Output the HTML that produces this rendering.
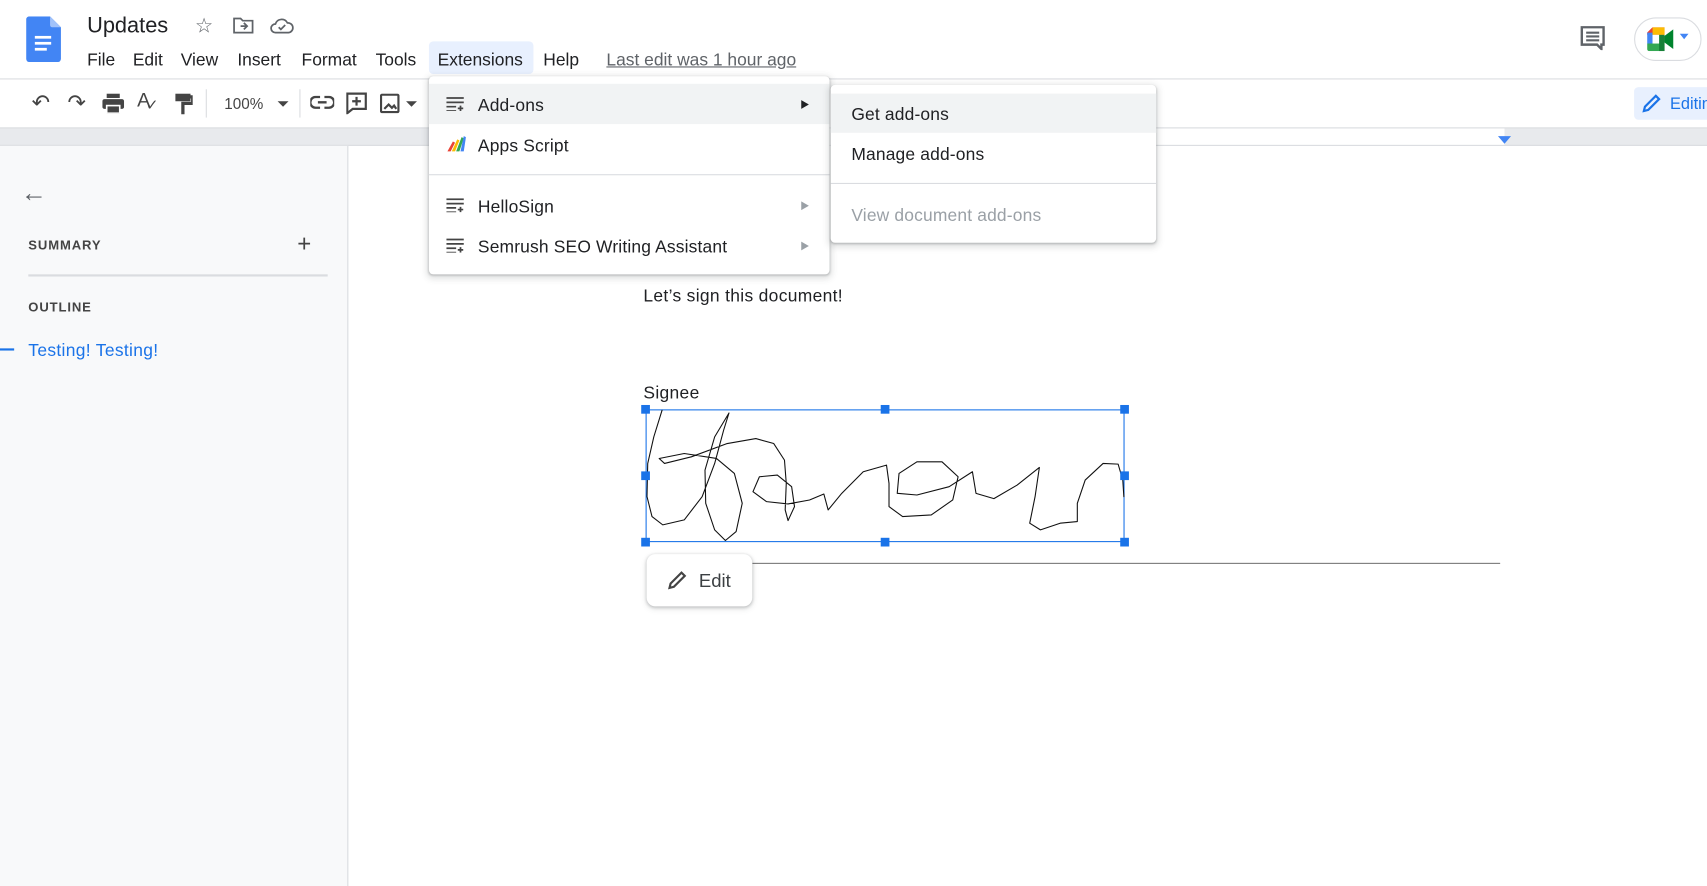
<!DOCTYPE html>
<html><head><meta charset="utf-8"><style>
*{margin:0;padding:0;box-sizing:border-box}
body{width:1707px;height:886px;overflow:hidden;background:#fff;font-family:"Liberation Sans",Arial,sans-serif;color:#202124}
#w{position:absolute;left:0;top:0;width:1568px;height:814px;transform:scale(1.08865);transform-origin:0 0}
.a{position:absolute}
.mi{position:absolute;font-size:16px;color:#202124;margin-top:2px;letter-spacing:.15px}
.dt{margin-top:2px;letter-spacing:.3px}
.ico{position:absolute;width:17px;height:13px}
</style></head><body><div id="w">
<!-- header -->
<svg class="a" style="left:24px;top:15px" width="32" height="42" viewBox="0 0 32 42"><path d="M3 0h19l10 10v29a3 3 0 0 1-3 3H3a3 3 0 0 1-3-3V3a3 3 0 0 1 3-3z" fill="#4285f4"/><path d="M22 0l10 10h-8a2 2 0 0 1-2-2z" fill="#a1c2fa"/><rect x="8" y="18" width="15" height="2.5" fill="#fff"/><rect x="8" y="23.5" width="15" height="2.5" fill="#fff"/><rect x="8" y="29" width="11" height="2.5" fill="#fff"/></svg>
<div class="a" style="left:80px;top:13px;font-size:20px">Updates</div>
<div class="a" style="left:179px;top:13px;font-size:19px;color:#5f6368">☆</div>
<svg class="a" style="left:214px;top:15px" width="20" height="16" viewBox="0 0 20 16" fill="none" stroke="#5f6368" stroke-width="1.6"><path d="M1 2h6l2 2h9v11H1z"/><path d="M7 9h6M10 6l3 3-3 3"/></svg>
<svg class="a" style="left:248px;top:15px" width="22" height="16" viewBox="0 0 22 16" fill="none" stroke="#5f6368" stroke-width="1.6"><path d="M5 15a4 4 0 0 1 0-8 6 6 0 0 1 11-1 4.5 4.5 0 0 1 1 9z"/><path d="M8 10l2 2 4-4"/></svg>
<div class="a" style="left:0;top:47px;font-size:16px;white-space:nowrap">
<span class="a" style="left:80px">File</span><span class="a" style="left:122px">Edit</span><span class="a" style="left:166px">View</span><span class="a" style="left:218px">Insert</span><span class="a" style="left:277px">Format</span><span class="a" style="left:345px">Tools</span>
<span class="a" style="left:394px;top:-9px;width:96px;height:30px;background:#e8f0fe;border-radius:4px"></span><span class="a" style="left:402px">Extensions</span><span class="a" style="left:499px">Help</span>
<span class="a" style="left:557px;color:#5f6368;text-decoration:underline">Last edit was 1 hour ago</span></div>
<svg class="a" style="left:1451px;top:24px" width="24" height="22" viewBox="0 0 24 22"><path d="M2 1h20v16h-2v4l-4-4H2z" fill="none" stroke="#5f6368" stroke-width="2.2"/><path d="M6 6h12M6 9.5h12M6 13h12" stroke="#5f6368" stroke-width="2"/></svg>
<div class="a" style="left:1501px;top:16px;width:62px;height:40px;border:1px solid #dadce0;border-radius:20px"></div>
<svg class="a" style="left:1513px;top:25px" width="26" height="22" viewBox="0 0 26 22"><path d="M0 5l5-5h11v7H5v0H0z" fill="#ea4335"/><rect x="0" y="5" width="5" height="10" fill="#4285f4"/><path d="M0 15h16v7H2a2 2 0 0 1-2-2z" fill="#34a853"/><rect x="5" y="0" width="11" height="7" fill="#fbbc04"/><rect x="5" y="7" width="6" height="8" fill="#fff"/><path d="M11 7h5v15h-5z" fill="#188038"/><path d="M16 8l8-6v18l-8-6z" fill="#00832d"/></svg>
<div class="a" style="left:1543px;top:31px;border:4.5px solid transparent;border-top:5px solid #4285f4"></div>
<div class="a" style="left:0;top:72px;width:1568px;height:1px;background:#dadce0"></div>
<!-- toolbar -->
<div class="a" style="left:0;top:73px;width:1568px;height:44px;font-size:20px;color:#444">
<span class="a" style="left:29px;top:9px">↶</span><span class="a" style="left:62px;top:9px">↷</span>
<svg class="a" style="left:94px;top:13px" width="20" height="18" viewBox="0 0 20 18"><rect x="4" y="0" width="12" height="4" fill="#444"/><rect x="0" y="5" width="20" height="9" rx="2" fill="#444"/><rect x="4" y="11" width="12" height="7" fill="#444" stroke="#fff" stroke-width="1.5"/></svg>
<span class="a" style="left:126px;top:9px;font-size:18px">A</span><span class="a" style="left:134px;top:15px;font-size:14px">✓</span>
<svg class="a" style="left:161px;top:13px" width="16" height="20" viewBox="0 0 16 20"><rect x="0" y="0" width="14" height="7" fill="#444"/><path d="M14 3h2v6H7v10" stroke="#444" stroke-width="3" fill="none"/></svg>
<div class="a" style="left:189px;top:9px;width:1px;height:26px;background:#dadce0"></div>
<span class="a" style="left:206px;top:14px;font-size:14px;color:#444">100%</span>
<div class="a" style="left:255px;top:20px;border:5px solid transparent;border-top:5px solid #444"></div>
<div class="a" style="left:275px;top:9px;width:1px;height:26px;background:#dadce0"></div>
<svg class="a" style="left:285px;top:15px" width="22" height="12" viewBox="0 0 22 12" fill="none" stroke="#444" stroke-width="2.2"><path d="M9 1H5a5 5 0 0 0 0 10h4M13 1h4a5 5 0 0 1 0 10h-4M7 6h8"/></svg>
<svg class="a" style="left:318px;top:12px" width="20" height="20" viewBox="0 0 20 20" fill="none" stroke="#444" stroke-width="2"><path d="M1 1h17v14H6l-5 4z"/><path d="M9.5 4v8M5.5 8h8"/></svg>
<svg class="a" style="left:349px;top:13px" width="18" height="18" viewBox="0 0 18 18" fill="none" stroke="#444" stroke-width="2"><rect x="1" y="1" width="16" height="16" rx="1"/><path d="M4 14l4-4 3 3 2-2 2 3" /></svg>
<div class="a" style="left:373px;top:20px;border:5px solid transparent;border-top:5px solid #444"></div>
</div>
<div class="a" style="left:1501px;top:80px;width:80px;height:30px;background:#e8f0fe;border-radius:4px"></div>
<svg class="a" style="left:1508px;top:86px" width="18" height="18" viewBox="0 0 18 18" fill="none" stroke="#1a73e8" stroke-width="2"><path d="M2 16l1-4L13 2l3 3L6 15z"/></svg>
<div class="a" style="left:1534px;top:87px;font-size:15px;color:#1a73e8">Editing</div>
<!-- ruler -->
<div class="a" style="left:0;top:117px;width:1568px;height:17px;background:#e8eaed;border-top:1px solid #dadce0;border-bottom:1px solid #dadce0"></div>
<div class="a" style="left:430px;top:118px;width:952px;height:15px;background:#fff"></div>
<div class="a" style="left:1376px;top:125px;border:6px solid transparent;border-top:7px solid #4285f4"></div>
<!-- sidebar -->
<div class="a" style="left:0;top:134px;width:320px;height:680px;background:#f8f9fa;border-right:1px solid #dadce0"></div>
<div class="a" style="left:19px;top:164px;font-size:24px;color:#5f6368">←</div>
<div class="a" style="left:26px;top:218px;font-size:12px;letter-spacing:.8px;color:#444;font-weight:bold">SUMMARY</div>
<div class="a" style="left:273px;top:211px;font-size:22px;color:#444">+</div>
<div class="a" style="left:26px;top:252px;width:275px;height:2px;background:#dadce0"></div>
<div class="a" style="left:26px;top:275px;font-size:12px;letter-spacing:.8px;color:#444;font-weight:bold">OUTLINE</div>
<div class="a" style="left:0;top:320px;width:13px;height:2px;background:#1a73e8"></div>
<div class="a dt" style="left:26px;top:312px;font-size:16px;color:#1a73e8">Testing! Testing!</div>
<!-- document -->
<div class="a" style="left:758px;top:224px;font-size:17px">!</div>
<div class="a dt" style="left:591px;top:262px;font-size:16px">Let’s sign this document!</div>
<div class="a dt" style="left:591px;top:351px;font-size:16px">Signee</div>
<div class="a" style="left:593px;top:376px;width:440px;height:122px;border:1px solid #1a73e8"></div>
<svg class="a" style="left:593px;top:376px" width="440" height="122" viewBox="72 537 1338 400" preserveAspectRatio="none"><path vector-effect="non-scaling-stroke" fill="none" stroke="#111" stroke-width="1" stroke-linejoin="round" stroke-linecap="round" d="M118 540 L95 620 L78 700 L76 800 L90 860 L120 885 L180 870 L230 800 L265 700 L290 600 L305 548 L265 620 L238 720 L240 820 L265 900 L295 932 L325 905 L342 820 L320 730 L270 685 L180 670 L110 685 L125 700 L200 680 L300 640 L380 625 L430 640 L460 690 L465 760 L462 840 L470 872 L488 830 L480 770 L440 735 L390 740 L372 785 L410 815 L470 822 L530 810 L570 792 L582 840 L620 790 L680 725 L745 705 L752 760 L752 830 L790 860 L870 855 L930 810 L945 740 L900 695 L830 695 L780 730 L775 790 L830 795 L920 770 L985 725 L995 790 L1045 806 L1110 765 L1172 712 L1160 800 L1145 880 L1175 900 L1230 880 L1278 875 L1278 820 L1300 750 L1350 700 L1392 702 L1405 750 L1408 800"/></svg>
<div class="a" style="left:589px;top:372px;width:8px;height:8px;background:#1a73e8"></div>
<div class="a" style="left:809px;top:372px;width:8px;height:8px;background:#1a73e8"></div>
<div class="a" style="left:1029px;top:372px;width:8px;height:8px;background:#1a73e8"></div>
<div class="a" style="left:589px;top:433px;width:8px;height:8px;background:#1a73e8"></div>
<div class="a" style="left:1029px;top:433px;width:8px;height:8px;background:#1a73e8"></div>
<div class="a" style="left:589px;top:494px;width:8px;height:8px;background:#1a73e8"></div>
<div class="a" style="left:809px;top:494px;width:8px;height:8px;background:#1a73e8"></div>
<div class="a" style="left:1029px;top:494px;width:8px;height:8px;background:#1a73e8"></div>
<div class="a" style="left:691px;top:517px;width:687px;height:1px;background:#777"></div>
<div class="a" style="left:594px;top:509px;width:97px;height:48px;background:#fff;border-radius:8px;box-shadow:0 1px 3px rgba(60,64,67,.3),0 2px 6px rgba(60,64,67,.12)"></div>
<svg class="a" style="left:613px;top:524px" width="18" height="18" viewBox="0 0 18 18" fill="none" stroke="#444" stroke-width="2"><path d="M2 16l1-4L13 2l3 3L6 15z"/></svg>
<div class="a" style="left:642px;top:524px;font-size:17px;color:#3c4043">Edit</div>
<!-- extensions menu -->
<div class="a" style="left:394px;top:70px;width:368px;height:182px;background:#fff;border-radius:4px;box-shadow:0 2px 6px 2px rgba(60,64,67,.15),0 1px 2px rgba(60,64,67,.3)"></div>
<div class="a" style="left:394px;top:77px;width:368px;height:37px;background:#f1f3f4"></div>
<div class="a" style="left:394px;top:160px;width:368px;height:1px;background:#dadce0"></div>
<svg class="ico" style="left:410px;top:89px" viewBox="0 0 17 13" stroke="#444" stroke-width="1.6" fill="none"><path d="M0 1h16M0 5h16M0 9h9M0 13h9M13 8v5M10.5 10.5h5"/></svg>
<svg class="ico" style="left:410px;top:182px" viewBox="0 0 17 13" stroke="#444" stroke-width="1.6" fill="none"><path d="M0 1h16M0 5h16M0 9h9M0 13h9M13 8v5M10.5 10.5h5"/></svg>
<svg class="ico" style="left:410px;top:219px" viewBox="0 0 17 13" stroke="#444" stroke-width="1.6" fill="none"><path d="M0 1h16M0 5h16M0 9h9M0 13h9M13 8v5M10.5 10.5h5"/></svg>
<svg class="a" style="left:410px;top:124px" width="18" height="16" viewBox="0 0 18 16"><path d="M1 15l5-9 2 1-4 8z" fill="#ea4335"/><path d="M5 15l5-11 2 1-4 10z" fill="#fbbc04"/><path d="M9 15l5-13 2 1-4 12z" fill="#34a853"/><path d="M13 15l3-14 2 1-2 13z" fill="#4285f4"/></svg>
<div class="mi" style="left:439px;top:87px">Add-ons</div>
<div class="mi" style="left:439px;top:124px">Apps Script</div>
<div class="mi" style="left:439px;top:180px">HelloSign</div>
<div class="mi" style="left:439px;top:217px">Semrush SEO Writing Assistant</div>
<div class="a" style="left:736px;top:92px;border:4px solid transparent;border-left:7px solid #202124"></div>
<div class="a" style="left:736px;top:185px;border:4px solid transparent;border-left:7px solid #9aa0a6"></div>
<div class="a" style="left:736px;top:222px;border:4px solid transparent;border-left:7px solid #9aa0a6"></div>
<!-- submenu -->
<div class="a" style="left:763px;top:78px;width:299px;height:145px;background:#fff;border-radius:4px;box-shadow:0 2px 6px 2px rgba(60,64,67,.15),0 1px 2px rgba(60,64,67,.3)"></div>
<div class="a" style="left:763px;top:86px;width:299px;height:36px;background:#f1f3f4"></div>
<div class="a" style="left:763px;top:168px;width:299px;height:1px;background:#dadce0"></div>
<div class="mi" style="left:782px;top:95px">Get add-ons</div>
<div class="mi" style="left:782px;top:132px">Manage add-ons</div>
<div class="mi" style="left:782px;top:188px;color:#9aa0a6">View document add-ons</div>
</div></body></html>
